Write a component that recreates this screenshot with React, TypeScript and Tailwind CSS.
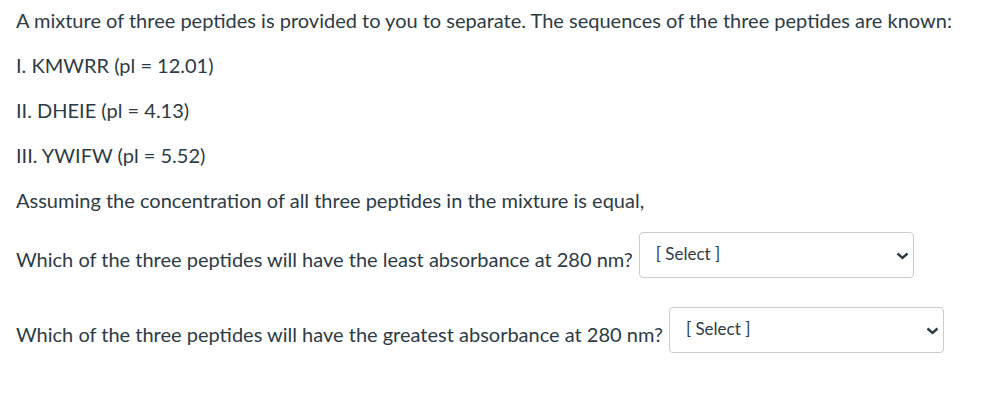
import React from "react";

function Sel() {
  return (
    <div className="flex h-[46px] w-[275px] items-center justify-between rounded-[4px] border border-[#c7cdd1] bg-white pl-[16px] pr-[4px]">
      <span className="-mt-[2px] text-[17px] leading-[24px] text-[#2d3b45]">[ Select ]</span>
      <svg width="13" height="8" viewBox="0 0 13 8" className="mt-[1px]">
        <path d="M1.5 1.5 L6.5 6 L11.5 1.5" fill="none" stroke="#2d3b45" strokeWidth="2.4" />
      </svg>
    </div>
  );
}

export default function App() {
  return (
    <div className="h-[402px] w-[985px] bg-white pl-[16px] pt-[5px] text-[20px] leading-[30px] text-[#2d3b45] [font-family:Lato,'Liberation_Sans',sans-serif]">
      <p className="mb-[15px]">A mixture of three peptides is provided to you to separate. The sequences of the three peptides are known:</p>
      <p className="mb-[15px]">I. KMWRR (pl = 12.01)</p>
      <p className="mb-[15px]">II. DHEIE (pl = 4.13)</p>
      <p className="mb-[15px]">III. YWIFW (pl = 5.52)</p>
      <p>Assuming the concentration of all three peptides in the mixture is equal,</p>
      <div className="mt-[17px] flex items-start gap-[6px]">
        <span className="mt-[12px]">Which of the three peptides will have the least absorbance at 280 nm?</span>
        <Sel />
      </div>
      <div className="mt-[29px] flex items-start gap-[6px]">
        <span className="mt-[12px]">Which of the three peptides will have the greatest absorbance at 280 nm?</span>
        <Sel />
      </div>
    </div>
  );
}
